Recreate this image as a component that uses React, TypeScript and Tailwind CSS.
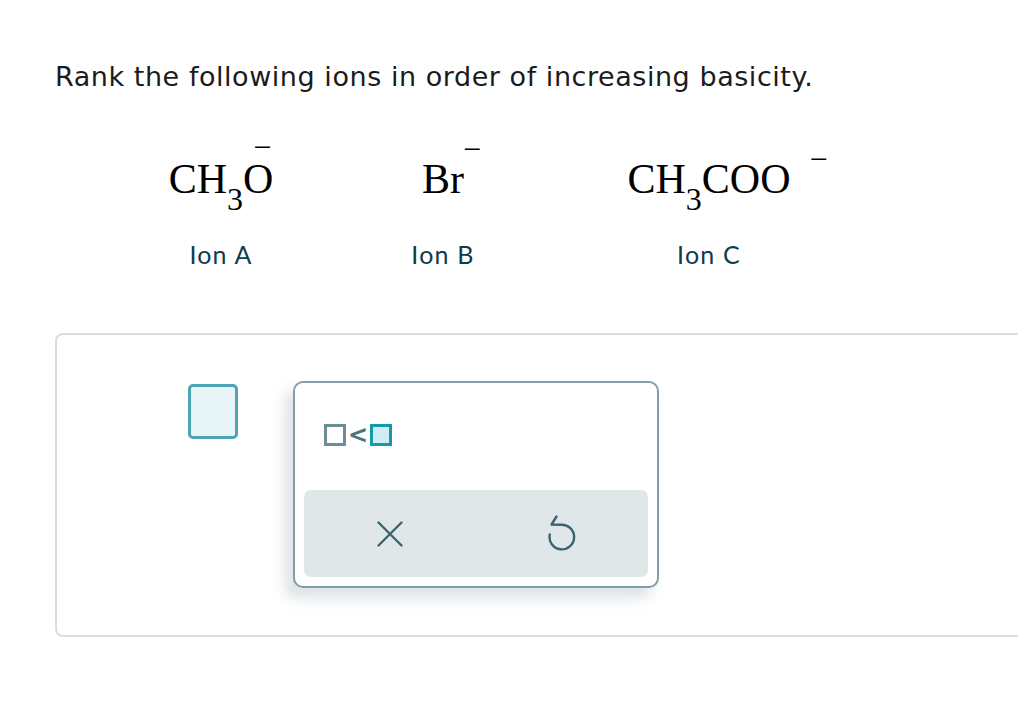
const serif = "font-['Liberation_Serif','Times_New_Roman',serif]";

function Minus({ className }: { className: string }) {
  // zero-width and zero line-height so it neither moves the centring nor the line box
  return (
    <span className={`relative inline-block w-0 text-[32px] leading-[0px] ${className}`}>
      −
    </span>
  );
}

function Sub3() {
  return <span className="text-[32px] leading-[0px] align-[-17px]">3</span>;
}

function IonColumn({
  formula,
  label,
  className,
}: {
  formula: React.ReactNode;
  label: string;
  className: string;
}) {
  return (
    <div className={`flex flex-col items-center ${className}`}>
      <div className={`${serif} h-[48px] text-[42px] leading-[48px] text-black whitespace-nowrap`}>
        {formula}
      </div>
      <div className="mt-[36px] font-['Lato','Open_Sans',sans-serif] text-[25px] leading-[30px] tracking-[1.2px] text-[#0f3c4a]">
        {label}
      </div>
    </div>
  );
}

function CrossIcon() {
  return (
    <svg width="26" height="26" viewBox="0 0 26 26" fill="none">
      <path d="M1.5 1.5 L24.5 24.5 M24.5 1.5 L1.5 24.5" stroke="#3b6470" strokeWidth="2.4" strokeLinecap="round" />
    </svg>
  );
}

function UndoIcon() {
  return (
    <svg width="32" height="38" viewBox="0 0 32 38" fill="none">
      <path
        d="M10.5 3.5 L5.5 11.5 L15 11.8 A12.3 12.3 0 1 1 3.8 21.5"
        stroke="#3b6470"
        strokeWidth="2.4"
        strokeLinecap="round"
        strokeLinejoin="round"
      />
    </svg>
  );
}

export default function App() {
  return (
    <div className="w-[1018px] h-[714px] overflow-hidden bg-white">
      <div className="pt-[61px] pl-[55px] font-['DejaVu_Sans','Verdana',sans-serif] text-[27px] leading-[32px] tracking-[0.55px] text-[#1b1b1b] whitespace-nowrap">
        Rank the following ions in order of increasing basicity.
      </div>

      <div className="mt-[62px] flex items-start pl-[166px]">
        <IonColumn
          className="w-[110px]"
          label="Ion A"
          formula={
            <>
              CH<Sub3 />O
              <Minus className="-left-[20px] -top-[35px]" />
            </>
          }
        />
        <IonColumn
          className="w-[110px] ml-[112px]"
          label="Ion B"
          formula={
            <>
              Br
              <Minus className="-left-[1px] -top-[33px]" />
            </>
          }
        />
        <IonColumn
          className="w-[200px] ml-[111px]"
          label="Ion C"
          formula={
            <>
              CH<Sub3 />COO
              <Minus className="left-[19px] -top-[23px]" />
            </>
          }
        />
      </div>

      <div className="mt-[64px] ml-[55px] w-[1000px] h-[304px] rounded-lg border-2 border-[#d5dee1] bg-white">
        <div className="flex items-start pl-[131px] pt-[46px]">
          <div className="mt-[3px] w-[50px] h-[55px] rounded-[5px] border-[3px] border-[#4ea4b5] bg-[#e7f5f9]" />

          <div className="ml-[55px] w-[366px] h-[207px] rounded-[10px] border-2 border-[#829ea6] bg-white shadow-[-8px_10px_14px_rgba(120,140,150,0.25)] p-[9px] flex flex-col">
            <div className="flex items-center pl-[20px] pt-[32px] gap-[2px]">
              <span className="w-[22px] h-[22px] border-[3px] border-[#6e8e97]" />
              <span className="font-['DejaVu_Sans',sans-serif] font-bold text-[24px] leading-[22px] text-[#4d7380]">
                &lt;
              </span>
              <span className="w-[22px] h-[22px] border-[3px] border-[#1798ac] bg-[#ceeef4]" />
            </div>

            <div className="mt-auto h-[87px] rounded-[7px] bg-[#e0e7e9] flex items-center">
              <div className="w-[172px] flex justify-center">
                <CrossIcon />
              </div>
              <div className="w-[172px] flex justify-center -mt-[4px]">
                <UndoIcon />
              </div>
            </div>
          </div>
        </div>
      </div>
    </div>
  );
}
